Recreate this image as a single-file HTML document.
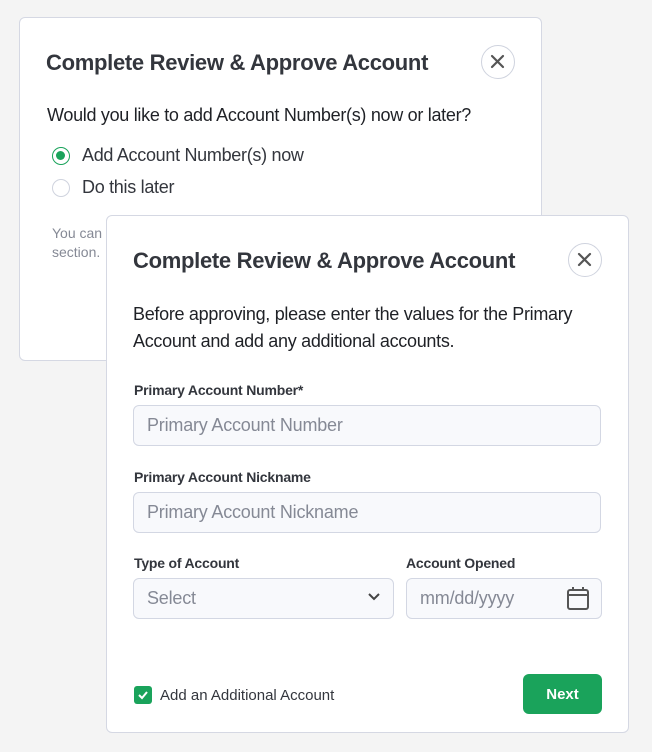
<!DOCTYPE html>
<html><head><style>
*{box-sizing:border-box;margin:0;padding:0}
body{width:652px;height:752px;background:#f4f4f4;font-family:"Liberation Sans",sans-serif;position:relative;overflow:hidden;color:#1f2126}
.card{position:absolute;background:#fff;border:1.5px solid #d5d8e3;border-radius:6px}
.t{position:absolute;white-space:nowrap}
.title{font-size:22px;font-weight:bold;color:#33363d;letter-spacing:-0.3px}
.close{position:absolute;width:34px;height:34px;border:1.5px solid #cfd3de;border-radius:50%}
.body{font-size:18px;color:#1f2126;letter-spacing:-0.3px}
.lbl{font-size:14px;font-weight:bold;color:#33363d;letter-spacing:-0.2px}
.inp{position:absolute;background:#f8f9fc;border:1.5px solid #d3d7e3;border-radius:6px;height:41px;font-size:18px;color:#858995;padding-left:13px;line-height:38px;letter-spacing:-0.2px}
</style></head><body>
<div class="card" style="left:19px;top:17px;width:523px;height:344px">
  <div class="t title" style="left:26px;top:32px">Complete Review &amp; Approve Account</div>
  <div class="close" style="left:461px;top:27px"><svg width="31" height="31" viewBox="0 0 31 31"><path d="M10 10L21 21M21 10L10 21" stroke="#555" stroke-width="2.2" stroke-linecap="round"/></svg></div>
  <div class="t body" style="left:27px;top:87px">Would you like to add Account Number(s) now or later?</div>
  <div style="position:absolute;left:32px;top:129px;width:18px;height:18px;border:1.5px solid #1aa35b;border-radius:50%"><div style="position:absolute;left:3px;top:3px;width:9px;height:9px;border-radius:50%;background:#1aa35b"></div></div>
  <div class="t body" style="left:62px;top:127px;color:#33363d">Add Account Number(s) now</div>
  <div style="position:absolute;left:32px;top:161px;width:18px;height:18px;border:1.5px solid #cfd3de;border-radius:50%"></div>
  <div class="t body" style="left:62px;top:159px;color:#33363d">Do this later</div>
  <div class="t" style="left:32px;top:206px;font-size:14px;color:#858995;line-height:19px">You can<br>section.</div>
</div>
<div class="card" style="left:106px;top:215px;width:523px;height:518px">
  <div class="t title" style="left:26px;top:32px">Complete Review &amp; Approve Account</div>
  <div class="close" style="left:461px;top:27px"><svg width="31" height="31" viewBox="0 0 31 31"><path d="M10 10L21 21M21 10L10 21" stroke="#555" stroke-width="2.2" stroke-linecap="round"/></svg></div>
  <div class="t body" style="left:26px;top:85px;line-height:27px">Before approving, please enter the values for the Primary<br>Account and add any additional accounts.</div>
  <div class="t lbl" style="left:27px;top:166px">Primary Account Number*</div>
  <div class="inp" style="left:26px;top:189px;width:468px">Primary Account Number</div>
  <div class="t lbl" style="left:27px;top:253px">Primary Account Nickname</div>
  <div class="inp" style="left:26px;top:276px;width:468px">Primary Account Nickname</div>
  <div class="t lbl" style="left:27px;top:339px">Type of Account</div>
  <div class="inp" style="left:26px;top:362px;width:261px">Select
    <svg style="position:absolute;right:12px;top:13px" width="14" height="10" viewBox="0 0 14 10"><path d="M2 2L7 7L12 2" stroke="#444" stroke-width="2" fill="none"/></svg></div>
  <div class="t lbl" style="left:299px;top:339px">Account Opened</div>
  <div class="inp" style="left:299px;top:362px;width:196px">mm/dd/yyyy
    <svg style="position:absolute;right:11px;top:7px" width="24" height="25" viewBox="0 0 24 25"><rect x="2" y="4" width="20" height="19" rx="2" stroke="#555" stroke-width="2" fill="none"/><path d="M2 9H22M7 1V5M17 1V5" stroke="#555" stroke-width="2"/></svg></div>
  <div style="position:absolute;left:27px;top:470px;width:18px;height:18px;background:#1aa35b;border-radius:3px"><svg width="18" height="18" viewBox="0 0 18 18"><path d="M5 9L8 12L13 6" stroke="#fff" stroke-width="2" fill="none"/></svg></div>
  <div class="t" style="left:53px;top:471px;font-size:15px;color:#33363d">Add an Additional Account</div>
  <div style="position:absolute;left:416px;top:458px;width:79px;height:40px;background:#1aa35b;border-radius:6px;color:#fff;font-weight:bold;font-size:15px;display:flex;align-items:center;justify-content:center">Next</div>
</div>
</body></html>
